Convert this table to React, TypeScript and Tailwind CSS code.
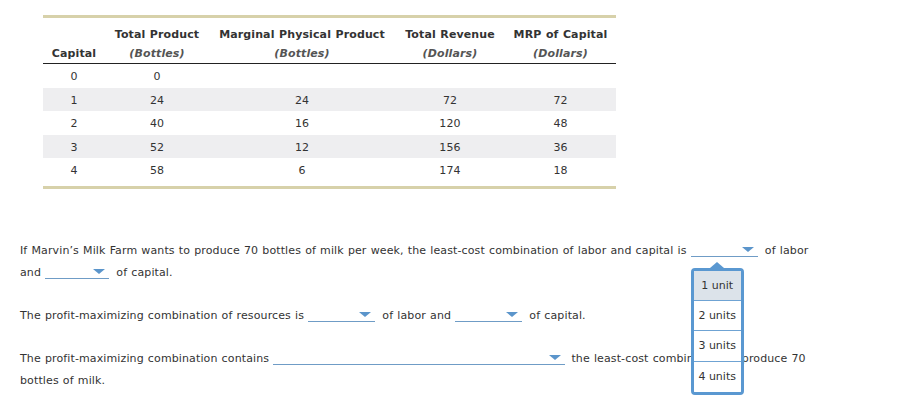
import React from "react";

function Drop({ w, children }: { w: string; children?: React.ReactNode }) {
  return (
    <span className={`relative inline-block h-[16px] align-[-3px] border-b border-[#6f9cc6] ${w}`}>
      <span className="absolute right-[4px] top-[6px] w-0 h-0 border-l-[6px] border-r-[6px] border-t-[5px] border-l-transparent border-r-transparent border-t-[#5b95cb]" />
      {children}
    </span>
  );
}

const rows = [
  ["0", "0", "", "", ""],
  ["1", "24", "24", "72", "72"],
  ["2", "40", "16", "120", "48"],
  ["3", "52", "12", "156", "36"],
  ["4", "58", "6", "174", "18"],
];
const rowH = ["h-[24px]", "h-[23px]", "h-[24px]", "h-[23px]", "h-[24px]"];

export default function App() {
  return (
    <div className="w-[910px] h-[413px] bg-white overflow-hidden font-['DejaVu_Sans','Verdana',sans-serif] text-[11px] tracking-[0.12px] [word-spacing:0.5px] text-[#333]">
      <div className="pt-[15px] pl-[43px]">
        <div className="w-[573px] border-t-[3px] border-b-[3px] border-[#d7d1aa]">
          <div className="grid grid-cols-[62px_104px_186px_110px_111px] h-[46px] border-b border-[#222] leading-[19px] text-center font-bold text-[#333]">
            <div className="flex flex-col justify-end pt-[2px]">
              <div>Capital</div>
            </div>
            <div className="flex flex-col justify-end">
              <div>Total Product</div>
              <div className="italic text-[#555]">(Bottles)</div>
            </div>
            <div className="flex flex-col justify-end">
              <div>Marginal Physical Product</div>
              <div className="italic text-[#555]">(Bottles)</div>
            </div>
            <div className="flex flex-col justify-end">
              <div>Total Revenue</div>
              <div className="italic text-[#555]">(Dollars)</div>
            </div>
            <div className="flex flex-col justify-end">
              <div>MRP of Capital</div>
              <div className="italic text-[#555]">(Dollars)</div>
            </div>
          </div>
          <div className="pb-[4px]">
            {rows.map((r, i) => (
              <div
                key={i}
                className={`grid grid-cols-[62px_104px_186px_110px_111px] items-center text-center pt-[3px] ${rowH[i]} ${i % 2 === 1 ? "bg-[#eeeef0]" : "bg-white"}`}
              >
                {r.map((c, j) => (
                  <div key={j}>{c}</div>
                ))}
              </div>
            ))}
          </div>
        </div>
      </div>

      <div className="pl-[20px] mt-[51px] leading-[22px] whitespace-nowrap">
        <div>
          If Marvin’s Milk Farm wants to produce 70 bottles of milk per week, the least-cost combination of labor and capital is{" "}
          <Drop w="w-[67px] mr-[3px] z-10">
            <span className="absolute left-0 top-[21px] w-[53px] z-20 tracking-normal [word-spacing:0px]">
              <span className="block ml-[19px] w-0 h-0 border-l-[7px] border-r-[7px] border-b-[6px] border-l-transparent border-r-transparent border-b-[#5a98d1]" />
              <span className="block w-[53px] border-[3px] border-[#5a98d1] rounded-[4px] bg-white overflow-hidden leading-[14px]">
                <span className="flex h-[30px] items-center justify-center bg-[#dce3ea] border-b border-[#6fa3d3]">1 unit</span>
                <span className="flex h-[30px] items-center justify-center bg-white border-b border-[#6fa3d3]">2 units</span>
                <span className="flex h-[31px] items-center justify-center bg-white border-b border-[#6fa3d3]">3 units</span>
                <span className="flex h-[30px] items-center justify-center bg-white">4 units</span>
              </span>
            </span>
          </Drop>{" "}
          of labor
          <br />
          and <Drop w="w-[64px] mr-[3px]" /> of capital.
        </div>

        <div className="mt-[21px]">
          The profit-maximizing combination of resources is <Drop w="w-[67px] mr-[3px]" /> of labor and{" "}
          <Drop w="w-[67px] mr-[3px]" /> of capital.
        </div>

        <div className="mt-[21px]">
          The profit-maximizing combination contains <Drop w="w-[292px] mr-[2px]" /> the least-cost combination to
          produce 70
          <br />
          bottles of milk.
        </div>
      </div>
    </div>
  );
}
